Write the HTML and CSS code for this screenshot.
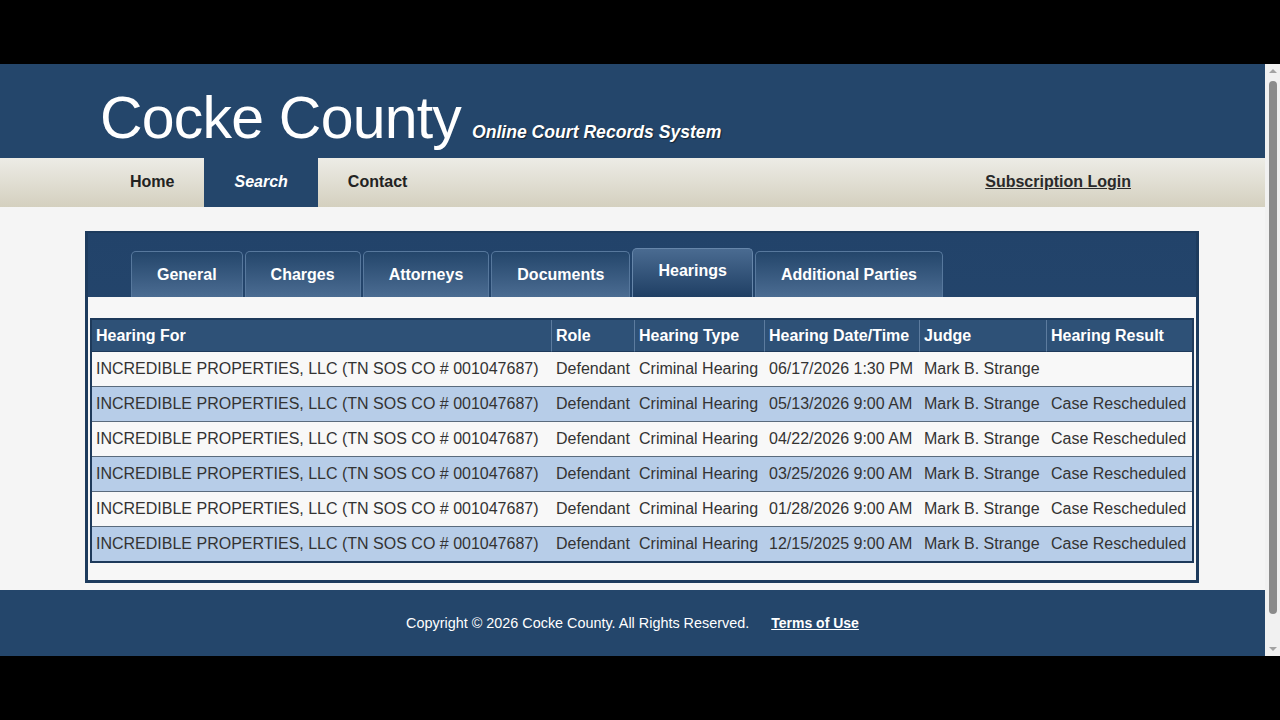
FILE: index.html
```html
<!DOCTYPE html>
<html lang="en">
<head>
  <meta charset="UTF-8" />
  <meta name="viewport" content="width=device-width, initial-scale=1.0"/>
  <title>Cocke County - Online Court Records System</title>
  <link rel="stylesheet" href="styles.css">
</head>
<body>

  <div class="viewport">
    <div class="page">

      <header class="site-header">
        <div class="wrap">
          <h1>Cocke County</h1>
          <span class="tagline">Online Court Records System</span>
        </div>
      </header>

      <nav class="menu">
        <div class="wrap">
          <ul>
            <li><a href="#">Home</a></li>
            <li class="active"><a href="#">Search</a></li>
            <li><a href="#">Contact</a></li>
          </ul>
          <a class="login" href="#">Subscription Login</a>
        </div>
      </nav>

      <main class="content">
        <div class="case-panel">
          <ul class="tabs">
            <li>General</li>
            <li>Charges</li>
            <li>Attorneys</li>
            <li>Documents</li>
            <li class="current">Hearings</li>
            <li>Additional Parties</li>
          </ul>

          <div class="tab-body">
            <table class="grid">
              <colgroup>
                <col class="c-for">
                <col class="c-role">
                <col class="c-type">
                <col class="c-date">
                <col class="c-judge">
                <col class="c-result">
              </colgroup>
              <thead>
                <tr>
                  <th>Hearing For</th>
                  <th>Role</th>
                  <th>Hearing Type</th>
                  <th>Hearing Date/Time</th>
                  <th>Judge</th>
                  <th>Hearing Result</th>
                </tr>
              </thead>
              <tbody>
                <tr>
                  <td>INCREDIBLE PROPERTIES, LLC (TN SOS CO # 001047687)</td>
                  <td>Defendant</td>
                  <td>Criminal Hearing</td>
                  <td>06/17/2026 1:30 PM</td>
                  <td>Mark B. Strange</td>
                  <td></td>
                </tr>
                <tr class="alt">
                  <td>INCREDIBLE PROPERTIES, LLC (TN SOS CO # 001047687)</td>
                  <td>Defendant</td>
                  <td>Criminal Hearing</td>
                  <td>05/13/2026 9:00 AM</td>
                  <td>Mark B. Strange</td>
                  <td>Case Rescheduled</td>
                </tr>
                <tr>
                  <td>INCREDIBLE PROPERTIES, LLC (TN SOS CO # 001047687)</td>
                  <td>Defendant</td>
                  <td>Criminal Hearing</td>
                  <td>04/22/2026 9:00 AM</td>
                  <td>Mark B. Strange</td>
                  <td>Case Rescheduled</td>
                </tr>
                <tr class="alt">
                  <td>INCREDIBLE PROPERTIES, LLC (TN SOS CO # 001047687)</td>
                  <td>Defendant</td>
                  <td>Criminal Hearing</td>
                  <td>03/25/2026 9:00 AM</td>
                  <td>Mark B. Strange</td>
                  <td>Case Rescheduled</td>
                </tr>
                <tr>
                  <td>INCREDIBLE PROPERTIES, LLC (TN SOS CO # 001047687)</td>
                  <td>Defendant</td>
                  <td>Criminal Hearing</td>
                  <td>01/28/2026 9:00 AM</td>
                  <td>Mark B. Strange</td>
                  <td>Case Rescheduled</td>
                </tr>
                <tr class="alt">
                  <td>INCREDIBLE PROPERTIES, LLC (TN SOS CO # 001047687)</td>
                  <td>Defendant</td>
                  <td>Criminal Hearing</td>
                  <td>12/15/2025 9:00 AM</td>
                  <td>Mark B. Strange</td>
                  <td>Case Rescheduled</td>
                </tr>
              </tbody>
            </table>
          </div>
        </div>
      </main>

      <footer class="site-footer">
        <span>Copyright &copy; 2026 Cocke County. All Rights Reserved.</span>
        <a href="#">Terms of Use</a>
      </footer>

    </div>

    <div class="scrollbar">
      <span class="arrow up"></span>
      <div class="track"><div class="thumb"></div></div>
      <span class="arrow down"></span>
    </div>
  </div>

</body>
</html>
```

FILE: styles.css
```css
body {
  margin: 0;
  padding-top: 64px;
  height: 656px;
  background: #000;
  font-family: 'Liberation Sans', Arial, sans-serif;
  overflow: hidden;
}
.viewport {
  display: flex;
  height: 592px;
  background: #f5f5f5;
}
.page {
  flex: 1;
  overflow: hidden;
}
.wrap {
  margin: 0 100px;
}

/* header */
.site-header {
  background: #24466b;
  height: 94px;
  box-sizing: border-box;
  padding-top: 24px;
}
.site-header .wrap {
  display: flex;
  align-items: baseline;
}
.site-header h1 {
  margin: 0;
  color: #fff;
  font-weight: normal;
  font-size: 59px;
  line-height: 60px;
  letter-spacing: -0.8px;
}
.tagline {
  margin-left: 11px;
  color: #fff;
  font-size: 17.6px;
  font-weight: bold;
  font-style: italic;
  text-shadow: 1px 1px 1px rgba(0,0,0,0.5);
}

/* menu */
.menu {
  height: 49px;
  background: linear-gradient(to bottom, #edece6, #d4d0bf);
}
.menu .wrap {
  display: flex;
  justify-content: space-between;
  height: 100%;
}
.menu ul {
  list-style: none;
  margin: 0;
  padding: 0;
  display: flex;
}
.menu li a {
  display: block;
  padding: 0 30px;
  line-height: 47px;
  color: #222;
  font-weight: bold;
  font-size: 16px;
  text-decoration: none;
}
.menu li.active a {
  background: #24466b;
  color: #fff;
  font-style: italic;
  line-height: 47px;
  padding-bottom: 2px;
}
.menu .login {
  padding: 0 34px 0 30px;
  line-height: 47px;
  color: #2a2a2a;
  font-weight: bold;
  font-size: 16px;
}

/* case panel */
.content {
  height: 383px;
  box-sizing: border-box;
  padding-top: 24px;
}
.case-panel {
  margin-left: 85px;
  width: 1114px;
  box-sizing: border-box;
  border: 3px solid #1d3b5d;
  border-top-width: 2px;
  background: linear-gradient(to bottom, #22436a, #284a70);
}
.tabs {
  list-style: none;
  margin: 0;
  padding: 15px 0 0 43px;
  display: flex;
  align-items: flex-end;
  gap: 2px;
}
.tabs li {
  padding: 0 25px;
  line-height: 45px;
  color: #fff;
  font-weight: bold;
  font-size: 16px;
  border: 1px solid #57789d;
  border-bottom: 0;
  border-radius: 5px 5px 0 0;
  background: linear-gradient(to bottom, #24466b, #4b6c92);
}
.tabs li.current {
  padding-bottom: 4px;
  line-height: 44px;
  border-color: #6686aa;
  background: linear-gradient(to bottom, #4a6b91, #1f3f64);
}
.tab-body {
  background: #f7f7f7;
  padding: 21px 2px 17px;
}

/* hearings table */
.grid {
  width: 100%;
  table-layout: fixed;
  border-collapse: separate;
  border-spacing: 0;
  border: 2px solid #1e3a5b;
  font-size: 16px;
}
.c-for { width: 460px; }
.c-role { width: 83px; }
.c-type { width: 130px; }
.c-date { width: 155px; }
.c-judge { width: 127px; }
.grid th {
  background: #2e5177;
  color: #fff;
  text-align: left;
  font-weight: bold;
  padding: 7px 4px 6px;
  line-height: 18px;
  border-right: 1px solid #5d7c9f;
  border-bottom: 1px solid #1e3a5b;
  white-space: nowrap;
}
.grid th:last-child {
  border-right: 0;
}
.grid td {
  padding: 8px 4px;
  line-height: 18px;
  color: #333;
  white-space: nowrap;
  background: #f8f8f8;
  border-bottom: 1px solid #5a6b7d;
}
.grid tr:last-child td {
  border-bottom: 0;
}
.grid tr.alt td {
  background: #b7cde8;
}

/* footer */
.site-footer {
  height: 66px;
  background: #24466b;
  color: #fff;
  font-size: 14.4px;
  display: flex;
  align-items: center;
  justify-content: center;
  gap: 22px;
}
.site-footer a {
  color: #fff;
  font-weight: bold;
  font-size: 14px;
}

/* browser scrollbar */
.scrollbar {
  width: 15px;
  background: #f1f1f1;
  display: flex;
  flex-direction: column;
  align-items: center;
}
.track {
  flex: 1;
  width: 100%;
  display: flex;
  justify-content: center;
  padding: 3px 0;
}
.thumb {
  width: 8px;
  height: 533px;
  border-radius: 4px;
  background: #8b8b8b;
}
.arrow {
  width: 0;
  height: 0;
  border-left: 4px solid transparent;
  border-right: 4px solid transparent;
  margin: 5px 0;
}
.arrow.up {
  border-bottom: 4px solid #a3a3a3;
}
.arrow.down {
  border-top: 4px solid #a3a3a3;
}
```
